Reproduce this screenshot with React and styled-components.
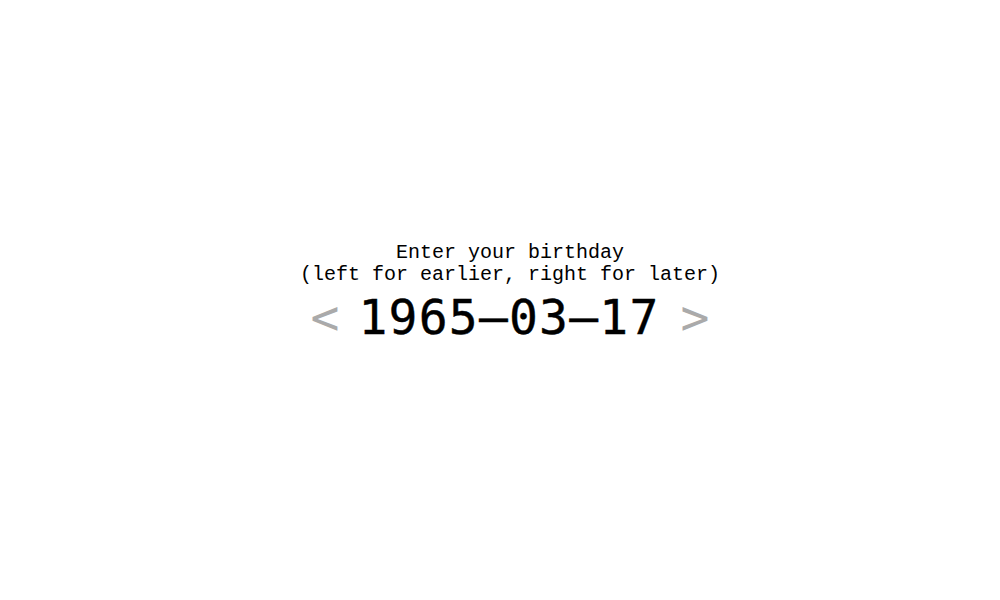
import React, { useState } from 'react';
import styled, { createGlobalStyle } from 'styled-components';

const GlobalStyle = createGlobalStyle`
  html, body {
    margin: 0;
    padding: 0;
    background: #ffffff;
  }
`;

const Page = styled.div`
  width: 1000px;
  height: 600px;
  display: flex;
  flex-direction: column;
  align-items: center;
  justify-content: center;
  padding: 0 0 10px 20px;
  box-sizing: border-box;
`;

const Label = styled.div`
  font-family: 'Liberation Mono', 'Courier New', monospace;
  font-size: 20px;
  line-height: 22px;
  color: #000;
  text-align: center;
  white-space: pre;
`;

const Picker = styled.div`
  display: flex;
  align-items: center;
  font-family: 'DejaVu Sans Mono', Menlo, monospace;
  font-size: 48px;
  line-height: 62px;
  color: #000;
  white-space: pre;
`;

const DateText = styled.span`
  letter-spacing: 1.2px;
  -webkit-text-stroke: 0.4px #000;
`;

const Arrow = styled.span`
  color: #aaaaaa;
  margin: ${(p) => (p.side === 'left' ? '0 19px 0 0' : '0 0 0 21px')};
  cursor: pointer;
  user-select: none;
`;

const pad = (n) => String(n).padStart(2, '0');

const App = () => {
  const [date, setDate] = useState(new Date(1965, 2, 17));

  const shift = (days) => {
    const d = new Date(date);
    d.setDate(d.getDate() + days);
    setDate(d);
  };

  // long dashes as drawn in the reference
  const text = `${date.getFullYear()}\u2013${pad(date.getMonth() + 1)}\u2013${pad(date.getDate())}`;

  return (
    <>
      <GlobalStyle />
      <Page>
        <Label>Enter your birthday</Label>
        <Label>(left for earlier, right for later)</Label>
        <Picker>
          <Arrow side="left" onClick={() => shift(-1)}>&lt;</Arrow>
          <DateText>{text}</DateText>
          <Arrow side="right" onClick={() => shift(1)}>&gt;</Arrow>
        </Picker>
      </Page>
    </>
  );
};

export default App;
